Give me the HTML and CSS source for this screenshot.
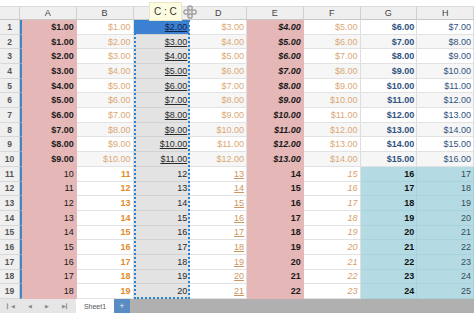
FILE: index.html
```html
<!DOCTYPE html>
<html lang="en">

<head>
    <meta charset="UTF-8">
    <title>Sheet1</title>
    <link rel="stylesheet" href="styles.css">
</head>

<body>
    <div id="book">
        <div class="top-strip"></div>

        <div class="sheet">
            <div class="hd corner"></div>
            <div class="hd">A</div>
            <div class="hd">B</div>
            <div class="hd">C</div>
            <div class="hd">D</div>
            <div class="hd">E</div>
            <div class="hd">F</div>
            <div class="hd">G</div>
            <div class="hd">H</div>

            <div class="rh">1</div><div class="c pink b first">$1.00</div><div class="c or">$1.00</div><div class="c sel cur u">$2.00</div><div class="c or">$3.00</div><div class="c pink b i">$4.00</div><div class="c or">$5.00</div><div class="c blue b">$6.00</div><div class="c blue">$7.00</div>
            <div class="rh">2</div><div class="c pink b first">$1.00</div><div class="c or alt">$2.00</div><div class="c sel u">$3.00</div><div class="c or alt">$4.00</div><div class="c pink b i">$5.00</div><div class="c or alt">$6.00</div><div class="c blue b alt">$7.00</div><div class="c blue alt">$8.00</div>
            <div class="rh">3</div><div class="c pink b first">$2.00</div><div class="c or">$3.00</div><div class="c sel u">$4.00</div><div class="c or">$5.00</div><div class="c pink b i">$6.00</div><div class="c or">$7.00</div><div class="c blue b">$8.00</div><div class="c blue">$9.00</div>
            <div class="rh">4</div><div class="c pink b first">$3.00</div><div class="c or alt">$4.00</div><div class="c sel u">$5.00</div><div class="c or alt">$6.00</div><div class="c pink b i">$7.00</div><div class="c or alt">$8.00</div><div class="c blue b alt">$9.00</div><div class="c blue alt">$10.00</div>
            <div class="rh">5</div><div class="c pink b first">$4.00</div><div class="c or">$5.00</div><div class="c sel u">$6.00</div><div class="c or">$7.00</div><div class="c pink b i">$8.00</div><div class="c or">$9.00</div><div class="c blue b">$10.00</div><div class="c blue">$11.00</div>
            <div class="rh">6</div><div class="c pink b first">$5.00</div><div class="c or alt">$6.00</div><div class="c sel u">$7.00</div><div class="c or alt">$8.00</div><div class="c pink b i">$9.00</div><div class="c or alt">$10.00</div><div class="c blue b alt">$11.00</div><div class="c blue alt">$12.00</div>
            <div class="rh">7</div><div class="c pink b first">$6.00</div><div class="c or">$7.00</div><div class="c sel u">$8.00</div><div class="c or">$9.00</div><div class="c pink b i">$10.00</div><div class="c or">$11.00</div><div class="c blue b">$12.00</div><div class="c blue">$13.00</div>
            <div class="rh">8</div><div class="c pink b first">$7.00</div><div class="c or alt">$8.00</div><div class="c sel u">$9.00</div><div class="c or alt">$10.00</div><div class="c pink b i">$11.00</div><div class="c or alt">$12.00</div><div class="c blue b alt">$13.00</div><div class="c blue alt">$14.00</div>
            <div class="rh">9</div><div class="c pink b first">$8.00</div><div class="c or">$9.00</div><div class="c sel u">$10.00</div><div class="c or">$11.00</div><div class="c pink b i">$12.00</div><div class="c or">$13.00</div><div class="c blue b">$14.00</div><div class="c blue">$15.00</div>
            <div class="rh">10</div><div class="c pink b first">$9.00</div><div class="c or alt">$10.00</div><div class="c sel u">$11.00</div><div class="c or alt">$12.00</div><div class="c pink b i">$13.00</div><div class="c or alt">$14.00</div><div class="c blue b alt">$15.00</div><div class="c blue alt">$16.00</div>

            <div class="rh">11</div><div class="c pink first">10</div><div class="c orb">11</div><div class="c sel">12</div><div class="c oru"><span>13</span></div><div class="c pink b">14</div><div class="c ori">15</div><div class="c sky b">16</div><div class="c sky">17</div>
            <div class="rh">12</div><div class="c pink first">11</div><div class="c orb">12</div><div class="c sel">13</div><div class="c oru"><span>14</span></div><div class="c pink b">15</div><div class="c ori">16</div><div class="c sky b">17</div><div class="c sky">18</div>
            <div class="rh">13</div><div class="c pink first">12</div><div class="c orb">13</div><div class="c sel">14</div><div class="c oru"><span>15</span></div><div class="c pink b">16</div><div class="c ori">17</div><div class="c sky b">18</div><div class="c sky">19</div>
            <div class="rh">14</div><div class="c pink first">13</div><div class="c orb">14</div><div class="c sel">15</div><div class="c oru"><span>16</span></div><div class="c pink b">17</div><div class="c ori">18</div><div class="c sky b">19</div><div class="c sky">20</div>
            <div class="rh">15</div><div class="c pink first">14</div><div class="c orb">15</div><div class="c sel">16</div><div class="c oru"><span>17</span></div><div class="c pink b">18</div><div class="c ori">19</div><div class="c sky b">20</div><div class="c sky">21</div>
            <div class="rh">16</div><div class="c pink first">15</div><div class="c orb">16</div><div class="c sel">17</div><div class="c oru"><span>18</span></div><div class="c pink b">19</div><div class="c ori">20</div><div class="c sky b">21</div><div class="c sky">22</div>
            <div class="rh">17</div><div class="c pink first">16</div><div class="c orb">17</div><div class="c sel">18</div><div class="c oru"><span>19</span></div><div class="c pink b">20</div><div class="c ori">21</div><div class="c sky b">22</div><div class="c sky">23</div>
            <div class="rh">18</div><div class="c pink first">17</div><div class="c orb">18</div><div class="c sel">19</div><div class="c oru"><span>20</span></div><div class="c pink b">21</div><div class="c ori">22</div><div class="c sky b">23</div><div class="c sky">24</div>
            <div class="rh">19</div><div class="c pink first">18</div><div class="c orb">19</div><div class="c sel">20</div><div class="c oru"><span>21</span></div><div class="c pink b">22</div><div class="c ori">23</div><div class="c sky b">24</div><div class="c sky">25</div>

            <!-- copy range around column C -->
            <div class="ants"></div>
        </div>

        <div class="tip">
            <span class="tip-text">C : C</span>
            <svg class="move" width="14" height="14" viewBox="0 0 14 14">
                <g fill="none" stroke="#9a9a9a" stroke-width="1.3">
                    <circle cx="7" cy="3" r="2.2"/>
                    <circle cx="7" cy="11" r="2.2"/>
                    <circle cx="3" cy="7" r="2.2"/>
                    <circle cx="11" cy="7" r="2.2"/>
                </g>
            </svg>
        </div>

        <div class="tabs">
            <div class="nav">
                <span>&#9614;&#9664;</span>
                <span>&#9664;</span>
                <span>&#9654;</span>
                <span>&#9654;&#9614;</span>
            </div>
            <div class="tab">Sheet1</div>
            <div class="add">+</div>
            <div class="scroll"></div>
        </div>
    </div>
</body>

</html>
```

FILE: styles.css
```css
body {
    margin: 0;
    font-family: "Liberation Sans", Arial, sans-serif;
    background: #fff;
}

#book {
    position: relative;
    width: 474px;
    height: 313px;
    overflow: hidden;
}

.top-strip {
    height: 6px;
    background: #fff;
}

.sheet {
    position: relative;
    display: grid;
    grid-template-columns: 20px repeat(8, 1fr);
    grid-template-rows: 14px repeat(19, 1fr);
    height: 293px;
}

.hd {
    background: #efefef;
    border-right: 1px solid #d0d0d0;
    border-bottom: 1px solid #c8c8c8;
    border-top: 1px solid #dcdcdc;
    font-size: 9px;
    color: #444;
    display: flex;
    align-items: center;
    justify-content: center;
}

.rh {
    background: #efefef;
    border-right: 1px solid #c8c8c8;
    border-bottom: 1px solid #d8d8d8;
    font-size: 8.5px;
    font-weight: bold;
    color: #555;
    display: flex;
    align-items: center;
    justify-content: center;
}

.c {
    border-right: 1px solid #dedede;
    border-bottom: 1px solid #e2e2e2;
    font-size: 9px;
    color: #222;
    display: flex;
    align-items: center;
    justify-content: flex-end;
    padding-right: 2px;
    white-space: nowrap;
    overflow: hidden;
}

.alt {
    background: #f6f6f6;
}

.b {
    font-weight: bold;
}

.i {
    font-style: italic;
}

.u {
    text-decoration: underline;
}

.pink {
    background: #e5b7b7;
    color: #1a1a1a;
    border-right-color: #e5b7b7;
    border-bottom-color: #e5b7b7;
}

.first {
    border-left: 2px solid #3f86c9;
}

.or {
    color: #dba875;
}

.orb {
    color: #e48a2c;
    font-weight: bold;
}

.oru span {
    color: #cc9660;
    text-decoration: underline;
}

.ori {
    color: #d7a06b;
    font-style: italic;
}

.blue {
    color: #2f527f;
}

.sky {
    background: #b4dbe4;
    color: #3a4a55;
    border-right-color: #a8d2dc;
    border-bottom-color: #a8d2dc;
}

.sky.b {
    color: #111;
}

.sel {
    background: #e3e3e3;
    color: #2a2a2a;
    border-bottom-color: #d2d2d2;
}

.cur {
    background: #3d7fd1;
    color: #10244a;
}

.ants {
    position: absolute;
    inset: 0;
    grid-column: 4 / 5;
    grid-row: 2 / 21;
    border: 2px dotted #2b84d2;
    pointer-events: none;
}

.tip {
    position: absolute;
    left: 149px;
    top: 2px;
    display: flex;
    align-items: center;
    gap: 1px;
}

.tip-text {
    background: #fdfbe0;
    border: 1px solid #ebe7c4;
    font-size: 10px;
    color: #333;
    padding: 3px 4px;
}

.move {
    display: block;
}

.tabs {
    display: flex;
    height: 14px;
    background: #b3b3b3;
}

.nav {
    width: 76px;
    background: #e6e6e6;
    display: flex;
    justify-content: space-around;
    align-items: center;
    font-size: 5px;
    color: #8a8a8a;
}

.tab {
    width: 38px;
    background: #fff;
    font-size: 7px;
    color: #555;
    display: flex;
    align-items: center;
    justify-content: center;
}

.add {
    width: 16px;
    background: #5a8cc4;
    color: #dfe8f2;
    font-size: 9px;
    display: flex;
    align-items: center;
    justify-content: center;
}

.scroll {
    flex: 1;
    background: #b0b0b0;
}
```
